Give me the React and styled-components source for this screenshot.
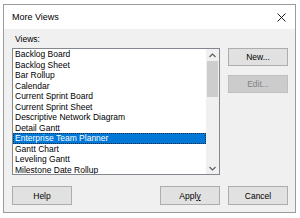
import { createGlobalStyle, styled } from "styled-components";

const GlobalStyle = createGlobalStyle`
  body {
    margin: 0;
    background: #ffffff;
    font-family: "Liberation Sans", Arial, sans-serif;
  }
`;

const views = [
  "Backlog Board",
  "Backlog Sheet",
  "Bar Rollup",
  "Calendar",
  "Current Sprint Board",
  "Current Sprint Sheet",
  "Descriptive Network Diagram",
  "Detail Gantt",
  "Enterprise Team Planner",
  "Gantt Chart",
  "Leveling Gantt",
  "Milestone Date Rollup",
];

const App = () => {
  const selected = "Enterprise Team Planner";

  return (
    <>
      <GlobalStyle />
      <Dialog>
        <TitleBar>
          <Title>More Views</Title>
          <CloseButton>
            <svg width='9' height='9' viewBox='0 0 9 9'>
              <path d='M0.5 0.5 L8.5 8.5 M8.5 0.5 L0.5 8.5' stroke='#1a1a1a' strokeWidth='1' />
            </svg>
          </CloseButton>
        </TitleBar>
        <Body>
          <Label>Views:</Label>
          <Main>
            <ListBox>
              <Items>
                {views.map((name) => (
                  <Item key={name} $selected={name === selected}>
                    {name}
                  </Item>
                ))}
              </Items>
              <ScrollBar>
                <ArrowButton>
                  <svg width='7' height='5' viewBox='0 0 7 5'>
                    <path d='M0.5 4 L3.5 1 L6.5 4' fill='none' stroke='#606060' strokeWidth='1.2' />
                  </svg>
                </ArrowButton>
                <Track>
                  <Thumb />
                </Track>
                <ArrowButton>
                  <svg width='7' height='5' viewBox='0 0 7 5'>
                    <path d='M0.5 1 L3.5 4 L6.5 1' fill='none' stroke='#606060' strokeWidth='1.2' />
                  </svg>
                </ArrowButton>
              </ScrollBar>
            </ListBox>
            <SideButtons>
              <Button>New...</Button>
              <Button disabled>Edit...</Button>
            </SideButtons>
          </Main>
          <Footer>
            <Button>Help</Button>
            <Spacer />
            <Button>
              Appl<u>y</u>
            </Button>
            <Button>Cancel</Button>
          </Footer>
        </Body>
      </Dialog>
    </>
  );
};

const Dialog = styled.div`
  margin: 4px 0 0 3px;
  width: 293px;
  height: 209px;
  box-sizing: border-box;
  border: 1px solid #9b9b9b;
  display: flex;
  flex-direction: column;
  background: #f0f0f0;
`;

const TitleBar = styled.div`
  height: 24px;
  display: flex;
  align-items: center;
  padding: 0 7px 0 8px;
  background: #ffffff;
`;

const Title = styled.div`
  flex: 1;
  font-size: 9px;
  color: #000000;
`;

const CloseButton = styled.div`
  width: 12px;
  height: 12px;
  display: flex;
  align-items: center;
  justify-content: center;
  margin-right: 1px;
`;

const Body = styled.div`
  flex: 1;
  display: flex;
  flex-direction: column;
  padding: 5px 7px 7px 8px;
`;

const Label = styled.div`
  font-size: 8.5px;
  line-height: 11px;
  height: 11px;
  margin: 0 0 3px 3px;
  color: #000000;
`;

const Main = styled.div`
  display: flex;
  gap: 8px;
  align-items: flex-start;
`;

const ListBox = styled.div`
  width: 208px;
  height: 127px;
  box-sizing: border-box;
  border: 1px solid #828790;
  background: #ffffff;
  display: flex;
  overflow: hidden;
`;

const Items = styled.div`
  flex: 1;
  display: flex;
  flex-direction: column;
  overflow: hidden;
`;

const Item = styled.div`
  height: 10.5px;
  line-height: 10.5px;
  padding-left: 2px;
  font-size: 8.5px;
  white-space: nowrap;
  color: ${(p) => (p.$selected ? "#ffffff" : "#000000")};
  background: ${(p) => (p.$selected ? "#0078d7" : "transparent")};
  outline: ${(p) => (p.$selected ? "1px dotted #1a2a3a" : "none")};
  outline-offset: -1px;
`;

const ScrollBar = styled.div`
  width: 13px;
  display: flex;
  flex-direction: column;
  background: #f0f0f0;
`;

const ArrowButton = styled.div`
  height: 12px;
  display: flex;
  align-items: center;
  justify-content: center;
`;

const Track = styled.div`
  flex: 1;
  padding: 0 1px;
`;

const Thumb = styled.div`
  height: 36px;
  background: #cdcdcd;
`;

const SideButtons = styled.div`
  display: flex;
  flex-direction: column;
  gap: 9px;
`;

const Button = styled.button`
  width: 60px;
  height: 18px;
  padding: 0;
  box-sizing: border-box;
  border: 1px solid ${(p) => (p.disabled ? "#bfbfbf" : "#adadad")};
  background: ${(p) => (p.disabled ? "#cccccc" : "#e1e1e1")};
  color: ${(p) => (p.disabled ? "#838383" : "#000000")};
  font-family: "Liberation Sans", Arial, sans-serif;
  font-size: 8.5px;
  line-height: 16px;
  text-align: center;
`;

const Footer = styled.div`
  margin-top: 11px;
  display: flex;
  gap: 8px;
  ${Button} {
    height: 19px;
  }
`;

const Spacer = styled.div`
  flex: 1;
`;

export default App;
